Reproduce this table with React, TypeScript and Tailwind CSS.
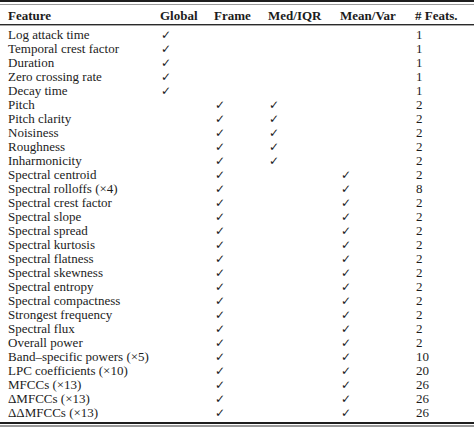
type Row = {
  name: string
  global?: boolean
  frame?: boolean
  med?: boolean
  mean?: boolean
  n: number
}

const rows: Row[] = [
  { name: "Log attack time", global: true, n: 1 },
  { name: "Temporal crest factor", global: true, n: 1 },
  { name: "Duration", global: true, n: 1 },
  { name: "Zero crossing rate", global: true, n: 1 },
  { name: "Decay time", global: true, n: 1 },
  { name: "Pitch", frame: true, med: true, n: 2 },
  { name: "Pitch clarity", frame: true, med: true, n: 2 },
  { name: "Noisiness", frame: true, med: true, n: 2 },
  { name: "Roughness", frame: true, med: true, n: 2 },
  { name: "Inharmonicity", frame: true, med: true, n: 2 },
  { name: "Spectral centroid", frame: true, mean: true, n: 2 },
  { name: "Spectral rolloffs (×4)", frame: true, mean: true, n: 8 },
  { name: "Spectral crest factor", frame: true, mean: true, n: 2 },
  { name: "Spectral slope", frame: true, mean: true, n: 2 },
  { name: "Spectral spread", frame: true, mean: true, n: 2 },
  { name: "Spectral kurtosis", frame: true, mean: true, n: 2 },
  { name: "Spectral flatness", frame: true, mean: true, n: 2 },
  { name: "Spectral skewness", frame: true, mean: true, n: 2 },
  { name: "Spectral entropy", frame: true, mean: true, n: 2 },
  { name: "Spectral compactness", frame: true, mean: true, n: 2 },
  { name: "Strongest frequency", frame: true, mean: true, n: 2 },
  { name: "Spectral flux", frame: true, mean: true, n: 2 },
  { name: "Overall power", frame: true, mean: true, n: 2 },
  { name: "Band–specific powers (×5)", frame: true, mean: true, n: 10 },
  { name: "LPC coefficients (×10)", frame: true, mean: true, n: 20 },
  { name: "MFCCs (×13)", frame: true, mean: true, n: 26 },
  { name: "ΔMFCCs (×13)", frame: true, mean: true, n: 26 },
  { name: "ΔΔMFCCs (×13)", frame: true, mean: true, n: 26 },
]

// column template shared by header and body so everything lines up
const cols = "grid grid-cols-[152px_54px_54px_72px_75px_1fr]"

function Check({ on }: { on?: boolean }) {
  if (!on) return <span />
  return (
    <span className="pl-[1px] font-['DejaVu_Sans',sans-serif] text-[12px] leading-[14px]">
      ✓
    </span>
  )
}

export default function App() {
  return (
    <div className="w-[474px] h-[427px] bg-white text-[#1c1c1c] font-['Liberation_Serif',serif] text-[13px] overflow-hidden">
      <div className="h-[2px] bg-[#1e1e1e]" />
      <div className="h-[2px]" />
      <div className="h-[1px] bg-[#9a9a9a]" />

      <div className={`${cols} h-[19px] items-center font-bold pl-[8px] pt-[1px]`}>
        <span>Feature</span>
        <span>Global</span>
        <span>Frame</span>
        <span>Med/IQR</span>
        <span>Mean/Var</span>
        <span># Feats.</span>
      </div>
      <div className="h-[1px] bg-[#2a2a2a]" />
      <div className="h-[1px] bg-[#a8a8a8]" />

      <div className="pt-[2px] flex flex-col">
        {rows.map((r) => (
          <div key={r.name} className={`${cols} h-[14px] leading-[14px] pl-[8px]`}>
            <span>{r.name}</span>
            <Check on={r.global} />
            <Check on={r.frame} />
            <Check on={r.med} />
            <Check on={r.mean} />
            <span className="pl-[1px]">{r.n}</span>
          </div>
        ))}
      </div>

      <div className="mt-[2px] h-[2px] bg-[#1e1e1e]" />
      <div className="h-[1px]" />
      <div className="h-[2px] bg-[#9a9a9a]" />
    </div>
  )
}
